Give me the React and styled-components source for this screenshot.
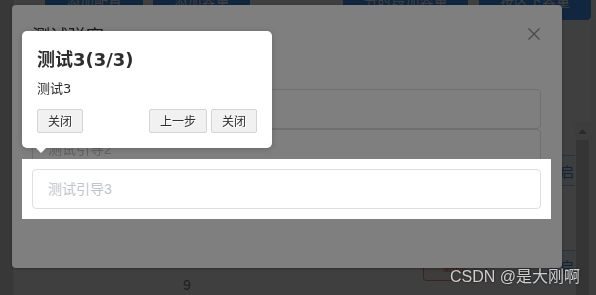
import React from 'react'
import styled, { createGlobalStyle } from 'styled-components'

const GlobalStyle = createGlobalStyle`
  html, body { margin: 0; padding: 0; }
  body {
    width: 596px;
    height: 295px;
    overflow: hidden;
    background: #fff;
    font-family: "Liberation Sans", "Noto Sans CJK SC", sans-serif;
  }
  * { box-sizing: border-box; }
`

/* ---------- page behind the dialog ---------- */

const Page = styled.div`
    display         : flex;
    width           : 596px;
    height          : 295px;
    overflow        : hidden;
    background      : #fff;
`
const Sidebar = styled.div`
    flex            : none;
    width           : 14px;
    background      : #e2e2e2;
    border-right    : 1px solid #f2f2f2;
`
const Main = styled.div`
    flex            : 1;
    min-width       : 0;
    display         : flex;
    flex-direction  : column;
`
const Toolbar = styled.div`
    flex            : none;
    display         : flex;
    justify-content : space-between;
    margin-top      : -20px;
    padding         : 0 5px 0 31px;
`
const ButtonGroup = styled.div`
    display         : flex;
    gap             : ${p=>p.gap}px;
`
const PrimaryButton = styled.button`
    width           : ${p=>p.w}px;
    height          : 40px;
    padding         : 0;
    border          : 1px solid #409eff;
    border-radius   : 4px;
    background      : #409eff;
    color           : #fff;
    font-family     : inherit;
    font-size       : 14px;
`
const TableArea = styled.div`
    flex            : 1;
    min-height      : 0;
    display         : flex;
`
const TableClip = styled.div`
    flex            : 1;
    min-width       : 0;
    overflow        : hidden;
`
const Table = styled.div`
    width           : 586px;
    display         : flex;
    flex-direction  : column;
`
const Row = styled.div`
    display         : grid;
    grid-template-columns : 346px 160px 80px;
    align-items     : center;
    height          : ${p=>p.h}px;
    font-size       : 14px;
    color           : #606266;
`
const NumberCell = styled.div`
    justify-self    : center;
    align-self      : ${p=>p.end ? 'end' : 'center'};
    padding-bottom  : ${p=>p.end ? '2px' : '0'};
    line-height     : 20px;
    color           : #7a7d83;
`
const PadCell = styled.div`
    display         : flex;
    padding-left    : ${p=>p.pad}px;
`
const DangerButton = styled.button`
    width           : 64px;
    height          : 30px;
    padding         : 0;
    border          : 1px solid #f78989;
    border-radius   : 3px;
    background      : #fef0f0;
    color           : #f56c6c;
    font-family     : inherit;
    font-size       : 12px;
`
const PlainButton = styled.button`
    width           : 60px;
    height          : 31px;
    padding         : 0;
    border          : 1px solid #a3cfff;
    border-radius   : 3px;
    background      : #f5f9ff;
    color           : #4a8fe0;
    font-family     : inherit;
    font-size       : 14px;
`
const Scrollbar = styled.div`
    flex            : none;
    width           : 15px;
    display         : flex;
    flex-direction  : column;
    padding-top     : 102px;
`
const ScrollArrow = styled.div`
    flex            : none;
    height          : 18px;
    display         : flex;
    align-items     : center;
    justify-content : center;
    background      : #f4f4f4;
`
const ScrollThumb = styled.div`
    flex            : 1;
    margin          : 0 1px;
    background      : #d4d4d4;
`
const Gutter = styled.div`
    flex            : none;
    width           : 6px;
    background      : #f4f4f4;
`

/* ---------- dialog ---------- */

const ModalMask = styled.div`
    position        : fixed;
    inset           : 0;
    background      : rgba(0,0,0,0.5);
`
const Dialog = styled.div`
    position        : absolute;
    left            : 12px;
    top             : 5px;
    width           : 550px;
    height          : 263px;
    background      : #fff;
    border-radius   : 4px;
    box-shadow      : 0 1px 3px rgba(0,0,0,0.3);
`
const DialogHeader = styled.div`
    display         : flex;
    justify-content : space-between;
    align-items     : flex-start;
    padding         : 20px 20px 10px;
`
const DialogTitle = styled.span`
    font-size       : 18px;
    line-height     : 24px;
    color           : #303133;
`
const CloseButton = styled.button`
    width           : 16px;
    height          : 16px;
    margin-top      : 1px;
    padding         : 0;
    border          : none;
    background      : none;
    color           : #909399;
    display         : flex;
`
const DialogBody = styled.div`
    padding         : 30px 21px 30px 20px;
    display         : flex;
    flex-direction  : column;
`
const Input = styled.input`
    display         : block;
    width           : 100%;
    height          : 40px;
    padding         : 0 15px;
    border          : 1px solid #dcdfe6;
    border-radius   : 4px;
    outline         : none;
    background      : #fff;
    color           : #606266;
    font-family     : inherit;
    font-size       : 14px;
    &::placeholder  { color: #c0c4cc; }
`
const GuideStage = styled.div`
    position        : relative;
    z-index         : 1;
    margin          : -10px;
    padding         : 10px;
    background      : #fff;
`

/* ---------- guide popover ---------- */

const GuideOverlay = styled.div`
    position        : fixed;
    inset           : 0;
    background      : rgba(0,0,0,0.5);
`
const Popover = styled.div`
    position        : absolute;
    left            : 22px;
    top             : 31px;
    z-index         : 2;
    width           : 250px;
    padding         : 15px;
    border-radius   : 5px;
    background      : #fff;
    color           : #2d2d2d;
    box-shadow      : 0 1px 6px rgba(0,0,0,0.2);
    font-family     : "DejaVu Sans", "Noto Sans CJK SC", sans-serif;
`
const PopoverTip = styled.div`
    position        : absolute;
    left            : 14px;
    bottom          : -10px;
    border          : 5px solid transparent;
    border-top-color: #fff;
`
const PopoverTitle = styled.div`
    margin          : 0 0 5px;
    font-size       : 18px;
    font-weight     : 700;
    line-height     : 27px;
`
const PopoverText = styled.div`
    font-size       : 13px;
    line-height     : 21px;
`
const PopoverFooter = styled.div`
    display         : flex;
    justify-content : space-between;
    margin-top      : 10px;
`
const GuideButton = styled.button`
    height          : 24px;
    padding         : 0 10px;
    border          : 1px solid #d4d4d4;
    border-radius   : 2px;
    background      : #f1f1f1;
    color           : #2d2d2d;
    text-shadow     : 1px 1px 0 #fff;
    font-family     : "Noto Sans CJK SC", sans-serif;
    font-size       : 12px;
    line-height     : 22px;
`

const Watermark = styled.div`
    position        : absolute;
    right           : 16px;
    bottom          : 8px;
    z-index         : 3;
    font-family     : "Liberation Sans", "Noto Sans CJK SC", sans-serif;
    font-size       : 16px;
    line-height     : 20px;
    color           : rgba(255,255,255,0.78);
    text-shadow     : 0 0 2px rgba(0,0,0,0.8);
    white-space     : nowrap;
`

const CloseIcon = () => <svg width="16" height="16" viewBox="0 0 16 16">
    <path d="M2.5 2.5 L13.5 13.5 M13.5 2.5 L2.5 13.5" stroke="currentColor" strokeWidth="1.3" fill="none"/>
</svg>

const App = () => {
    return <>
        <GlobalStyle/>
        <Page>
            <Sidebar/>
            <Main>
                <Toolbar>
                    <ButtonGroup gap={10}>
                        <PrimaryButton w={98}>添加配置</PrimaryButton>
                        <PrimaryButton w={97}>添加容量</PrimaryButton>
                    </ButtonGroup>
                    <ButtonGroup gap={11}>
                        <PrimaryButton w={125}>分时段加容量</PrimaryButton>
                        <PrimaryButton w={112}>按区下容量</PrimaryButton>
                    </ButtonGroup>
                </Toolbar>
                <TableArea>
                    <TableClip>
                        <Table>
                            <Row h={87}/>
                            <Row h={127}>
                                <NumberCell>8</NumberCell>
                                <PadCell pad={63}><DangerButton>删除</DangerButton></PadCell>
                                <PadCell pad={10}><PlainButton>开启</PlainButton></PadCell>
                            </Row>
                            <Row h={63}>
                                <NumberCell end>9</NumberCell>
                                <PadCell pad={63}><DangerButton>删除</DangerButton></PadCell>
                                <PadCell pad={10}><PlainButton>开启</PlainButton></PadCell>
                            </Row>
                        </Table>
                    </TableClip>
                    <Scrollbar>
                        <ScrollArrow>
                            <svg width="9" height="5" viewBox="0 0 9 5"><polygon points="0,5 4.5,0 9,5" fill="#a8a8a8"/></svg>
                        </ScrollArrow>
                        <ScrollThumb/>
                    </Scrollbar>
                    <Gutter/>
                </TableArea>
            </Main>
        </Page>

        <ModalMask/>
        <Dialog>
            <DialogHeader>
                <DialogTitle>测试弹窗</DialogTitle>
                <CloseButton><CloseIcon/></CloseButton>
            </DialogHeader>
            <DialogBody>
                <Input placeholder="测试引导1"/>
                <Input placeholder="测试引导2"/>
                <GuideStage>
                    <Input placeholder="测试引导3"/>
                </GuideStage>
            </DialogBody>
        </Dialog>

        <GuideOverlay/>
        <Popover>
            <PopoverTitle>测试3(3/3)</PopoverTitle>
            <PopoverText>测试3</PopoverText>
            <PopoverFooter>
                <GuideButton>关闭</GuideButton>
                <ButtonGroup gap={4}>
                    <GuideButton>上一步</GuideButton>
                    <GuideButton>关闭</GuideButton>
                </ButtonGroup>
            </PopoverFooter>
            <PopoverTip/>
        </Popover>

        <Watermark>CSDN @是大刚啊</Watermark>
    </>
}

export default App
